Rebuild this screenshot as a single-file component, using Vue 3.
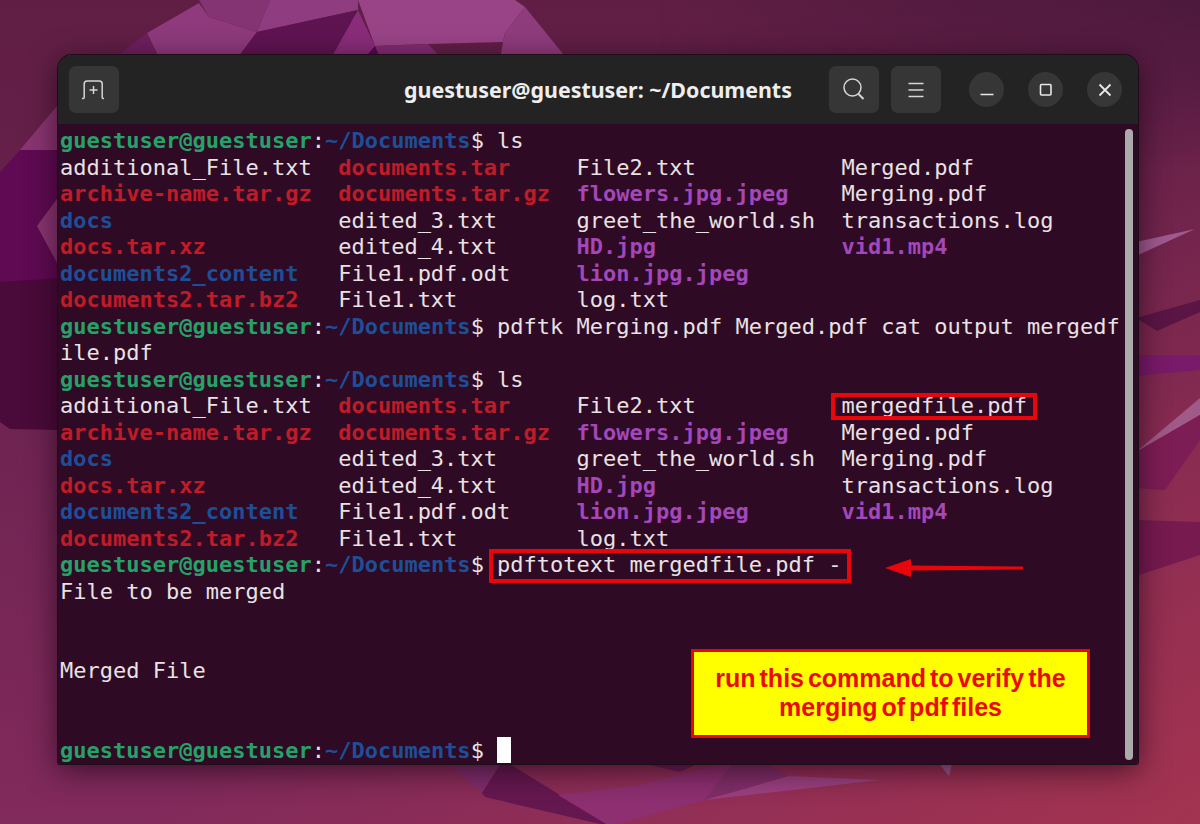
<script setup>
const P = { g: 'guestuser@guestuser', b: '~/Documents' }
const prompt = (rest = '') => [['g', P.g], ['w', ':'], ['b', P.b], ['w', '$ ' + rest]]
const pad = (s, n) => s.padEnd(n, ' ')
const cell = (c, s, n) => [c, n ? pad(s, n) : s]

const listing = (col4) => [
  [cell('w', 'additional_File.txt', 21), cell('r', 'documents.tar', 18), cell('w', 'File2.txt', 20), cell(...col4[0])],
  [cell('r', 'archive-name.tar.gz', 21), cell('r', 'documents.tar.gz', 18), cell('p', 'flowers.jpg.jpeg', 20), cell(...col4[1])],
  [cell('b', 'docs', 21), cell('w', 'edited_3.txt', 18), cell('w', 'greet_the_world.sh', 20), cell(...col4[2])],
  [cell('r', 'docs.tar.xz', 21), cell('w', 'edited_4.txt', 18), cell('p', 'HD.jpg', 20), cell(...col4[3])],
  [cell('b', 'documents2_content', 21), cell('w', 'File1.pdf.odt', 18), cell('p', 'lion.jpg.jpeg', 20), cell(...col4[4])],
  [cell('r', 'documents2.tar.bz2', 21), cell('w', 'File1.txt', 18), cell('w', 'log.txt', 20)]
]

const lines = [
  prompt('ls'),
  ...listing([['w', 'Merged.pdf'], ['w', 'Merging.pdf'], ['w', 'transactions.log'], ['p', 'vid1.mp4'], ['w', '']]),
  prompt('pdftk Merging.pdf Merged.pdf cat output mergedf'),
  [['w', 'ile.pdf']],
  prompt('ls'),
  ...listing([['w', 'mergedfile.pdf'], ['w', 'Merged.pdf'], ['w', 'Merging.pdf'], ['w', 'transactions.log'], ['p', 'vid1.mp4']]),
  prompt('pdftotext mergedfile.pdf -'),
  [['w', 'File to be merged']],
  [],
  [],
  [['w', 'Merged File']],
  [],
  [],
  prompt('')
]

const shapes = [
  ['#8e3a7c', '147,33 199,3 209,17 257,32 236,60 160,60'],
  ['#6f1f5f', '147,33 160,60 112,60'],
  ['#843373', '199,0 270,0 257,32 209,17'],
  ['#8f3c80', '270,0 358,0 358,10 257,32'],
  ['#5f1452', '257,32 358,10 330,60 236,60'],
  ['#8a2c7a', '358,10 375,46 363,60 330,60'],
  ['#9a4488', '358,0 515,0 525,7 505,33 503,42 428,44 375,46'],
  ['#842c72', '375,46 428,44 443,60 372,60'],
  ['#55085a', '375,46 363,60 381,60'],
  ['#8f3c7d', '525,7 568,60 500,60 503,42 505,33'],
  ['#8a3570', '20,150 62,100 62,150'],
  ['#5f0a52', '0,172 20,150 62,150 62,282 0,282'],
  ['#8a3570', '37,226 62,192 62,272'],
  ['#4a0a3a', '0,282 62,278 62,430 10,429 0,422'],
  ['#7f2d6c', '444,760 503,760 482,793'],
  ['#65184f', '503,760 482,793 485,797 600,824 612,824 560,795'],
  ['#8d2f70', '558,795 606,824 618,824 704,800 740,760 640,785'],
  ['#9a4080', '704,800 880,780 788,776 740,790'],
  ['#7f2e68', '788,776 760,760 735,760 704,800 740,790'],
  ['#a05a90', '936,760 949,776 953,760'],
  ['#6a1d5c', '630,760 680,772 705,760'],
  ['#a05a90', '1136,242 1195,229 1136,256'],
  ['#5a1545', '1136,318 1200,300 1200,312 1157,331'],
  ['#7a1a6a', '1136,355 1200,355 1200,370 1136,376'],
  ['#a05a88', '1136,452 1200,398 1200,415'],
  ['#7d1d55', '1136,452 1200,415 1200,440 1165,490 1136,488'],
  ['#771a50', '1136,520 1200,522 1200,555 1136,576']
]
</script>

<template>
  <div class="page">
    <svg class="wallpaper" viewBox="0 0 1200 824" aria-hidden="true">
      <defs>
        <linearGradient id="base" x1="0" y1="0" x2="0" y2="1">
          <stop offset="0" stop-color="#601e44" />
          <stop offset=".45" stop-color="#6c2350" />
          <stop offset="1" stop-color="#812a5b" />
        </linearGradient>
        <linearGradient id="warm" x1="0" y1="0" x2="1" y2="1">
          <stop offset=".55" stop-color="#a33350" stop-opacity="0" />
          <stop offset="1" stop-color="#a33350" stop-opacity="1" />
        </linearGradient>
        <linearGradient id="cool" x1="0" y1="0" x2="1" y2="0">
          <stop offset=".55" stop-color="#45183a" stop-opacity="0" />
          <stop offset="1" stop-color="#45183a" stop-opacity=".75" />
        </linearGradient>
        <linearGradient id="coolfade" x1="0" y1="0" x2="0" y2="1">
          <stop offset="0" stop-color="#fff" />
          <stop offset=".2" stop-color="#000" />
        </linearGradient>
        <mask id="topfade"><rect width="1200" height="824" fill="url(#coolfade)" /></mask>
      </defs>
      <rect width="1200" height="824" fill="url(#base)" />
      <rect width="1200" height="824" fill="url(#warm)" />
      <rect width="1200" height="824" fill="url(#cool)" mask="url(#topfade)" />
      <polygon v-for="(s, i) in shapes" :key="i" :fill="s[0]" :points="s[1]" />
    </svg>

    <main class="window">
      <header class="titlebar">
        <button class="btn">
          <svg width="26" height="22" viewBox="0 0 26 22" fill="none" stroke="#d6d6d6" stroke-width="1.5">
            <path d="M1 19.5h1.2q1 0 1-1V5q0-3 3-3h12q3 0 3 3v13.500q0 1 1 1H23" />
            <path d="M12.500 7v8M8.500 11h8" />
          </svg>
        </button>
        <div class="title">guestuser@guestuser: ~/Documents</div>
        <button class="btn">
          <svg width="26" height="26" viewBox="0 0 26 26" fill="none" stroke="#d6d6d6" stroke-width="1.5">
            <circle cx="11.500" cy="10.500" r="8.500" />
            <path d="M17.500 17l5 5" stroke-width="2" />
          </svg>
        </button>
        <button class="btn menu">
          <svg width="18" height="18" viewBox="0 0 18 18" fill="none" stroke="#d6d6d6" stroke-width="1.5">
            <path d="M1.500 2.500h15M1.500 9h15M1.500 15.500h15" />
          </svg>
        </button>
        <div class="wm">
          <button class="circle">
            <svg width="16" height="16" viewBox="0 0 16 16" stroke="#e8e8e8" stroke-width="1.600" fill="none"><path d="M1.500 12.500h13" /></svg>
          </button>
          <button class="circle">
            <svg width="16" height="16" viewBox="0 0 16 16" stroke="#e8e8e8" stroke-width="1.600" fill="none"><rect x="2.500" y="2.500" width="10.500" height="10.500" rx="1" /></svg>
          </button>
          <button class="circle">
            <svg width="16" height="16" viewBox="0 0 16 16" stroke="#e8e8e8" stroke-width="1.800" fill="none"><path d="M2.500 2.500l11 11M13.500 2.500l-11 11" /></svg>
          </button>
        </div>
      </header>
      <section class="term">
        <div class="output">
          <div v-for="(line, i) in lines" :key="i" class="line"><span v-for="(seg, j) in line" :key="j" :class="seg[0]">{{ seg[1] }}</span></div>
          <span class="cursor"></span>
        </div>
        <div class="scrollbar"></div>
      </section>
    </main>

    <div class="mark mark-file"></div>
    <div class="mark mark-cmd"></div>
    <svg class="arrow" width="140" height="20" viewBox="0 0 140 20" aria-hidden="true">
      <path d="M0 10 26 1v6.500l112 1v3l-112 1V19z" fill="#e8050b" />
    </svg>
    <div class="note">run this command to verify the<br />merging of pdf files</div>
  </div>
</template>

<style>
html, body { margin: 0; background: #601e44; }
</style>

<style scoped>
.page {
  position: relative;
  width: 1200px;
  height: 824px;
  box-sizing: border-box;
  padding: 55px 62px 60px 58px;
  overflow: hidden;
  display: flex;
}
.wallpaper { position: absolute; inset: 0; width: 1200px; height: 824px; }
.window {
  position: relative;
  flex: 1;
  display: flex;
  flex-direction: column;
  border-radius: 14px 14px 2px 2px;
  overflow: hidden;
  box-shadow: 0 0 0 1px #1c0d18, 0 6px 30px rgba(20, 0, 15, .65);
}
.titlebar {
  height: 69px;
  flex: none;
  box-sizing: border-box;
  background: #232323;
  display: flex;
  align-items: center;
  padding: 0 16px 0 11px;
}
.btn {
  width: 50px;
  height: 47px;
  flex: none;
  padding: 0;
  border: 0;
  border-radius: 7px;
  background: #363636;
  display: flex;
  align-items: center;
  justify-content: center;
}
.menu { margin-left: 12px; }
.title {
  flex: 1;
  text-align: center;
  color: #eeeeee;
  font: 700 21.400px "Noto Sans", sans-serif;
  letter-spacing: 0;
  padding-left: 248px;
  white-space: nowrap;
}
.wm { display: flex; gap: 24px; margin-left: 28px; }
.circle {
  width: 35px;
  height: 35px;
  padding: 0;
  border: 0;
  border-radius: 50%;
  background: #363636;
  display: flex;
  align-items: center;
  justify-content: center;
}
.term {
  position: relative;
  flex: 1;
  background: #2f0a24;
  display: flex;
  padding: 4px 5px 0 2px;
}
.output {
  position: relative;
  flex: 1;
  font: 22px/26.500px "DejaVu Sans Mono", monospace;
  color: #e8e2e4;
  white-space: pre;
}
.line { height: 26.500px; }
.w { color: #e8e2e4; }
.g { color: #26a269; font-weight: 700; }
.b { color: #1d4f99; font-weight: 700; }
.r { color: #c01c28; font-weight: 700; }
.p { color: #a347ba; font-weight: 700; }
.cursor {
  position: absolute;
  left: 437px;
  top: 608.500px;
  width: 13.500px;
  height: 26.500px;
  background: #fff;
}
.scrollbar {
  width: 8px;
  height: 631px;
  margin-top: 1px;
  border-radius: 4px;
  background: #ababab;
}
.mark {
  position: absolute;
  box-sizing: border-box;
  border: 4px solid #e8050b;
}
.mark-file { left: 831px; top: 393px; width: 206px; height: 27px; }
.mark-cmd { left: 489px; top: 549px; width: 362px; height: 34px; }
.arrow { position: absolute; left: 885px; top: 558px; }
.note {
  position: absolute;
  left: 691px;
  top: 649px;
  width: 399px;
  height: 89px;
  box-sizing: border-box;
  border: 3px solid #e8050b;
  background: #ffff00;
  color: #ea0a0a;
  font: 700 25px/29px "Liberation Sans", sans-serif;
  letter-spacing: 0;
  word-spacing: -3px;
  text-align: center;
  padding-top: 12px;
}
</style>
